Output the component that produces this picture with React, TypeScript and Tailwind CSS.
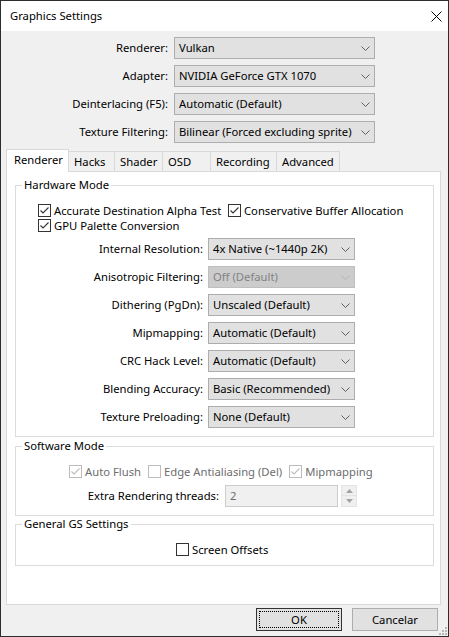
import clsx from 'clsx';

const topRows = [
  { label: 'Renderer:', value: 'Vulkan' },
  { label: 'Adapter:', value: 'NVIDIA GeForce GTX 1070' },
  { label: 'Deinterlacing (F5):', value: 'Automatic (Default)' },
  { label: 'Texture Filtering:', value: 'Bilinear (Forced excluding sprite)' },
];

const hwRows = [
  { label: 'Internal Resolution:', value: '4x Native (~1440p 2K)' },
  { label: 'Anisotropic Filtering:', value: 'Off (Default)', disabled: true },
  { label: 'Dithering (PgDn):', value: 'Unscaled (Default)' },
  { label: 'Mipmapping:', value: 'Automatic (Default)' },
  { label: 'CRC Hack Level:', value: 'Automatic (Default)' },
  { label: 'Blending Accuracy:', value: 'Basic (Recommended)' },
  { label: 'Texture Preloading:', value: 'None (Default)' },
];

const tabs = [
  { name: 'Renderer', w: 'w-[63px]' },
  { name: 'Hacks', w: 'w-[46px]' },
  { name: 'Shader', w: 'w-[48px]' },
  { name: 'OSD', w: 'w-[48px]' },
  { name: 'Recording', w: 'w-[66px]' },
  { name: 'Advanced', w: 'w-[63px]' },
];

function Chevron({ disabled }: { disabled?: boolean }) {
  return (
    <svg width="9" height="5" viewBox="0 0 9 5" className="shrink-0">
      <polyline
        points="0.5,0.5 4.5,4.5 8.5,0.5"
        fill="none"
        stroke={disabled ? '#b4b4b4' : '#606060'}
        strokeWidth="1"
      />
    </svg>
  );
}

function Combo({ value, disabled, className }: { value: string; disabled?: boolean; className?: string }) {
  return (
    <div
      className={clsx(
        'flex h-[22px] items-center justify-between border pl-[4px] pr-[4px]',
        disabled ? 'border-[#bfbfbf] bg-[#cccccc] text-[#838383]' : 'border-[#adadad] bg-[#e1e1e1] text-black',
        className
      )}
    >
      <span className="whitespace-nowrap">{value}</span>
      <Chevron disabled={disabled} />
    </div>
  );
}

function CheckBox({ label, checked, disabled }: { label: string; checked?: boolean; disabled?: boolean }) {
  const c = disabled ? '#bcbcbc' : '#333333';
  return (
    <div className={clsx('flex h-[15px] items-center gap-[3px] whitespace-nowrap', disabled ? 'text-[#6d6d6d]' : 'text-black')}>
      <svg width="13" height="13" viewBox="0 0 13 13" className="shrink-0">
        <rect x="0.5" y="0.5" width="12" height="12" fill="#ffffff" stroke={c} />
        {checked && <polyline points="2.5,6.5 5,9 10.5,3.5" fill="none" stroke={c} strokeWidth="1.1" />}
      </svg>
      <span>{label}</span>
    </div>
  );
}

function Group({ title, className, children }: { title: string; className?: string; children: React.ReactNode }) {
  return (
    <fieldset className={clsx('ml-[8px] w-[419px] border border-[#dcdcdc] px-0', className)}>
      <legend className="ml-[6px] px-[2px] leading-[16px]">{title}</legend>
      {children}
    </fieldset>
  );
}

export default function App() {
  return (
    <div className="flex h-[637px] w-[449px] flex-col border border-[#2d2d2d] bg-[#f0f0f0] font-['Noto_Sans',sans-serif] text-[11.25px] leading-[16px] text-black">
      {/* title bar */}
      <div className="flex h-[30px] shrink-0 items-center justify-between bg-white pl-[9px] pr-[6px]">
        <span className="text-[11.25px]">Graphics Settings</span>
        <svg width="11" height="11" viewBox="0 0 11 11">
          <path d="M0.5 0.5 L10.5 10.5 M10.5 0.5 L0.5 10.5" stroke="#000" strokeWidth="1" />
        </svg>
      </div>

      <div className="relative flex flex-1 flex-col px-[5px] pt-[6px]">
        {/* top combos */}
        <div className="flex flex-col gap-[6px]">
          {topRows.map((r) => (
            <div key={r.label} className="flex items-center">
              <span className="w-[162px] text-right">{r.label}</span>
              <Combo value={r.value} className="ml-[6px] w-[201px]" />
            </div>
          ))}
        </div>

        {/* tabs */}
        <div className="relative z-10 -mb-px mt-[6px] flex h-[23px] items-end">
          {tabs.map((t, i) =>
            i === 0 ? (
              <div key={t.name} className={clsx('h-[23px] border-x border-t border-[#d9d9d9] bg-white pl-[7px] pt-[2px]', t.w)}>
                {t.name}
              </div>
            ) : (
              <div key={t.name} className={clsx('h-[21px] border-y border-r border-[#d9d9d9] bg-[#f0f0f0] pl-[5px] pt-[2px]', t.w)}>
                {t.name}
              </div>
            )
          )}
        </div>

        {/* panel */}
        <div className="h-[434px] w-[435px] border border-[#d9d9d9] bg-white">
          <Group title="Hardware Mode" className="mt-[5px]">
            <div className="pb-[8px] pt-[10px]">
              <div className="flex pl-[22px]">
                <div className="w-[190px]">
                  <CheckBox label="Accurate Destination Alpha Test" checked />
                </div>
                <CheckBox label="Conservative Buffer Allocation" checked />
              </div>
              <div className="pl-[22px]">
                <CheckBox label="GPU Palette Conversion" checked />
              </div>
              <div className="mt-[5px] flex flex-col gap-[6px]">
                {hwRows.map((r) => (
                  <div key={r.label} className="flex items-center">
                    <span className="w-[187px] text-right">{r.label}</span>
                    <Combo value={r.value} disabled={r.disabled} className="ml-[5px] w-[147px]" />
                  </div>
                ))}
              </div>
            </div>
          </Group>

          <Group title="Software Mode" className="mt-[1px]">
            <div className="pb-[8px] pt-[10px]">
              <div className="flex gap-[7px] pl-[53px]">
                <CheckBox label="Auto Flush" checked disabled />
                <CheckBox label="Edge Antialiasing (Del)" disabled />
                <CheckBox label="Mipmapping" checked disabled />
              </div>
              <div className="mt-[6px] flex items-center">
                <span className="w-[203px] text-right">Extra Rendering threads:</span>
                <div className="ml-[6px] flex h-[22px] w-[113px] items-center border border-[#cccccc] bg-[#f0f0f0] pl-[4px] text-[#6d6d6d]">
                  2
                </div>
                <div className="ml-[3px] flex h-[22px] w-[16px] flex-col">
                  <div className="flex h-[11px] items-center justify-center border border-[#e3e3e3] bg-[#f0f0f0]">
                    <svg width="7" height="4" viewBox="0 0 7 4">
                      <polygon points="0,4 3.5,0 7,4" fill="#a3a3a3" />
                    </svg>
                  </div>
                  <div className="flex h-[11px] items-center justify-center border border-t-0 border-[#e3e3e3] bg-[#f0f0f0]">
                    <svg width="7" height="4" viewBox="0 0 7 4">
                      <polygon points="0,0 3.5,4 7,0" fill="#a3a3a3" />
                    </svg>
                  </div>
                </div>
              </div>
            </div>
          </Group>

          <Group title="General GS Settings">
            <div className="pb-[8px] pl-[160px] pt-[10px]">
              <CheckBox label="Screen Offsets" />
            </div>
          </Group>
        </div>

        {/* buttons */}
        <div className="mr-[5px] mt-[3px] flex justify-end gap-[10px]">
          <div className="relative flex h-[23px] w-[86px] items-center justify-center border border-[#333333] bg-[#e1e1e1]">
            <span className="absolute inset-[2px] border border-dotted border-black" />
            OK
          </div>
          <div className="flex h-[23px] w-[86px] items-center justify-center border border-[#adadad] bg-[#e1e1e1]">
            Cancelar
          </div>
        </div>

        {/* resize grip */}
        <svg width="8" height="8" viewBox="0 0 8 8" className="absolute bottom-[1px] right-[1px]">
          {[
            [6, 0],
            [6, 3],
            [3, 3],
            [6, 6],
            [3, 6],
            [0, 6],
          ].map(([x, y]) => (
            <rect key={`${x}-${y}`} x={x} y={y} width="2" height="2" fill="#b8b8b8" />
          ))}
        </svg>
      </div>
    </div>
  );
}
